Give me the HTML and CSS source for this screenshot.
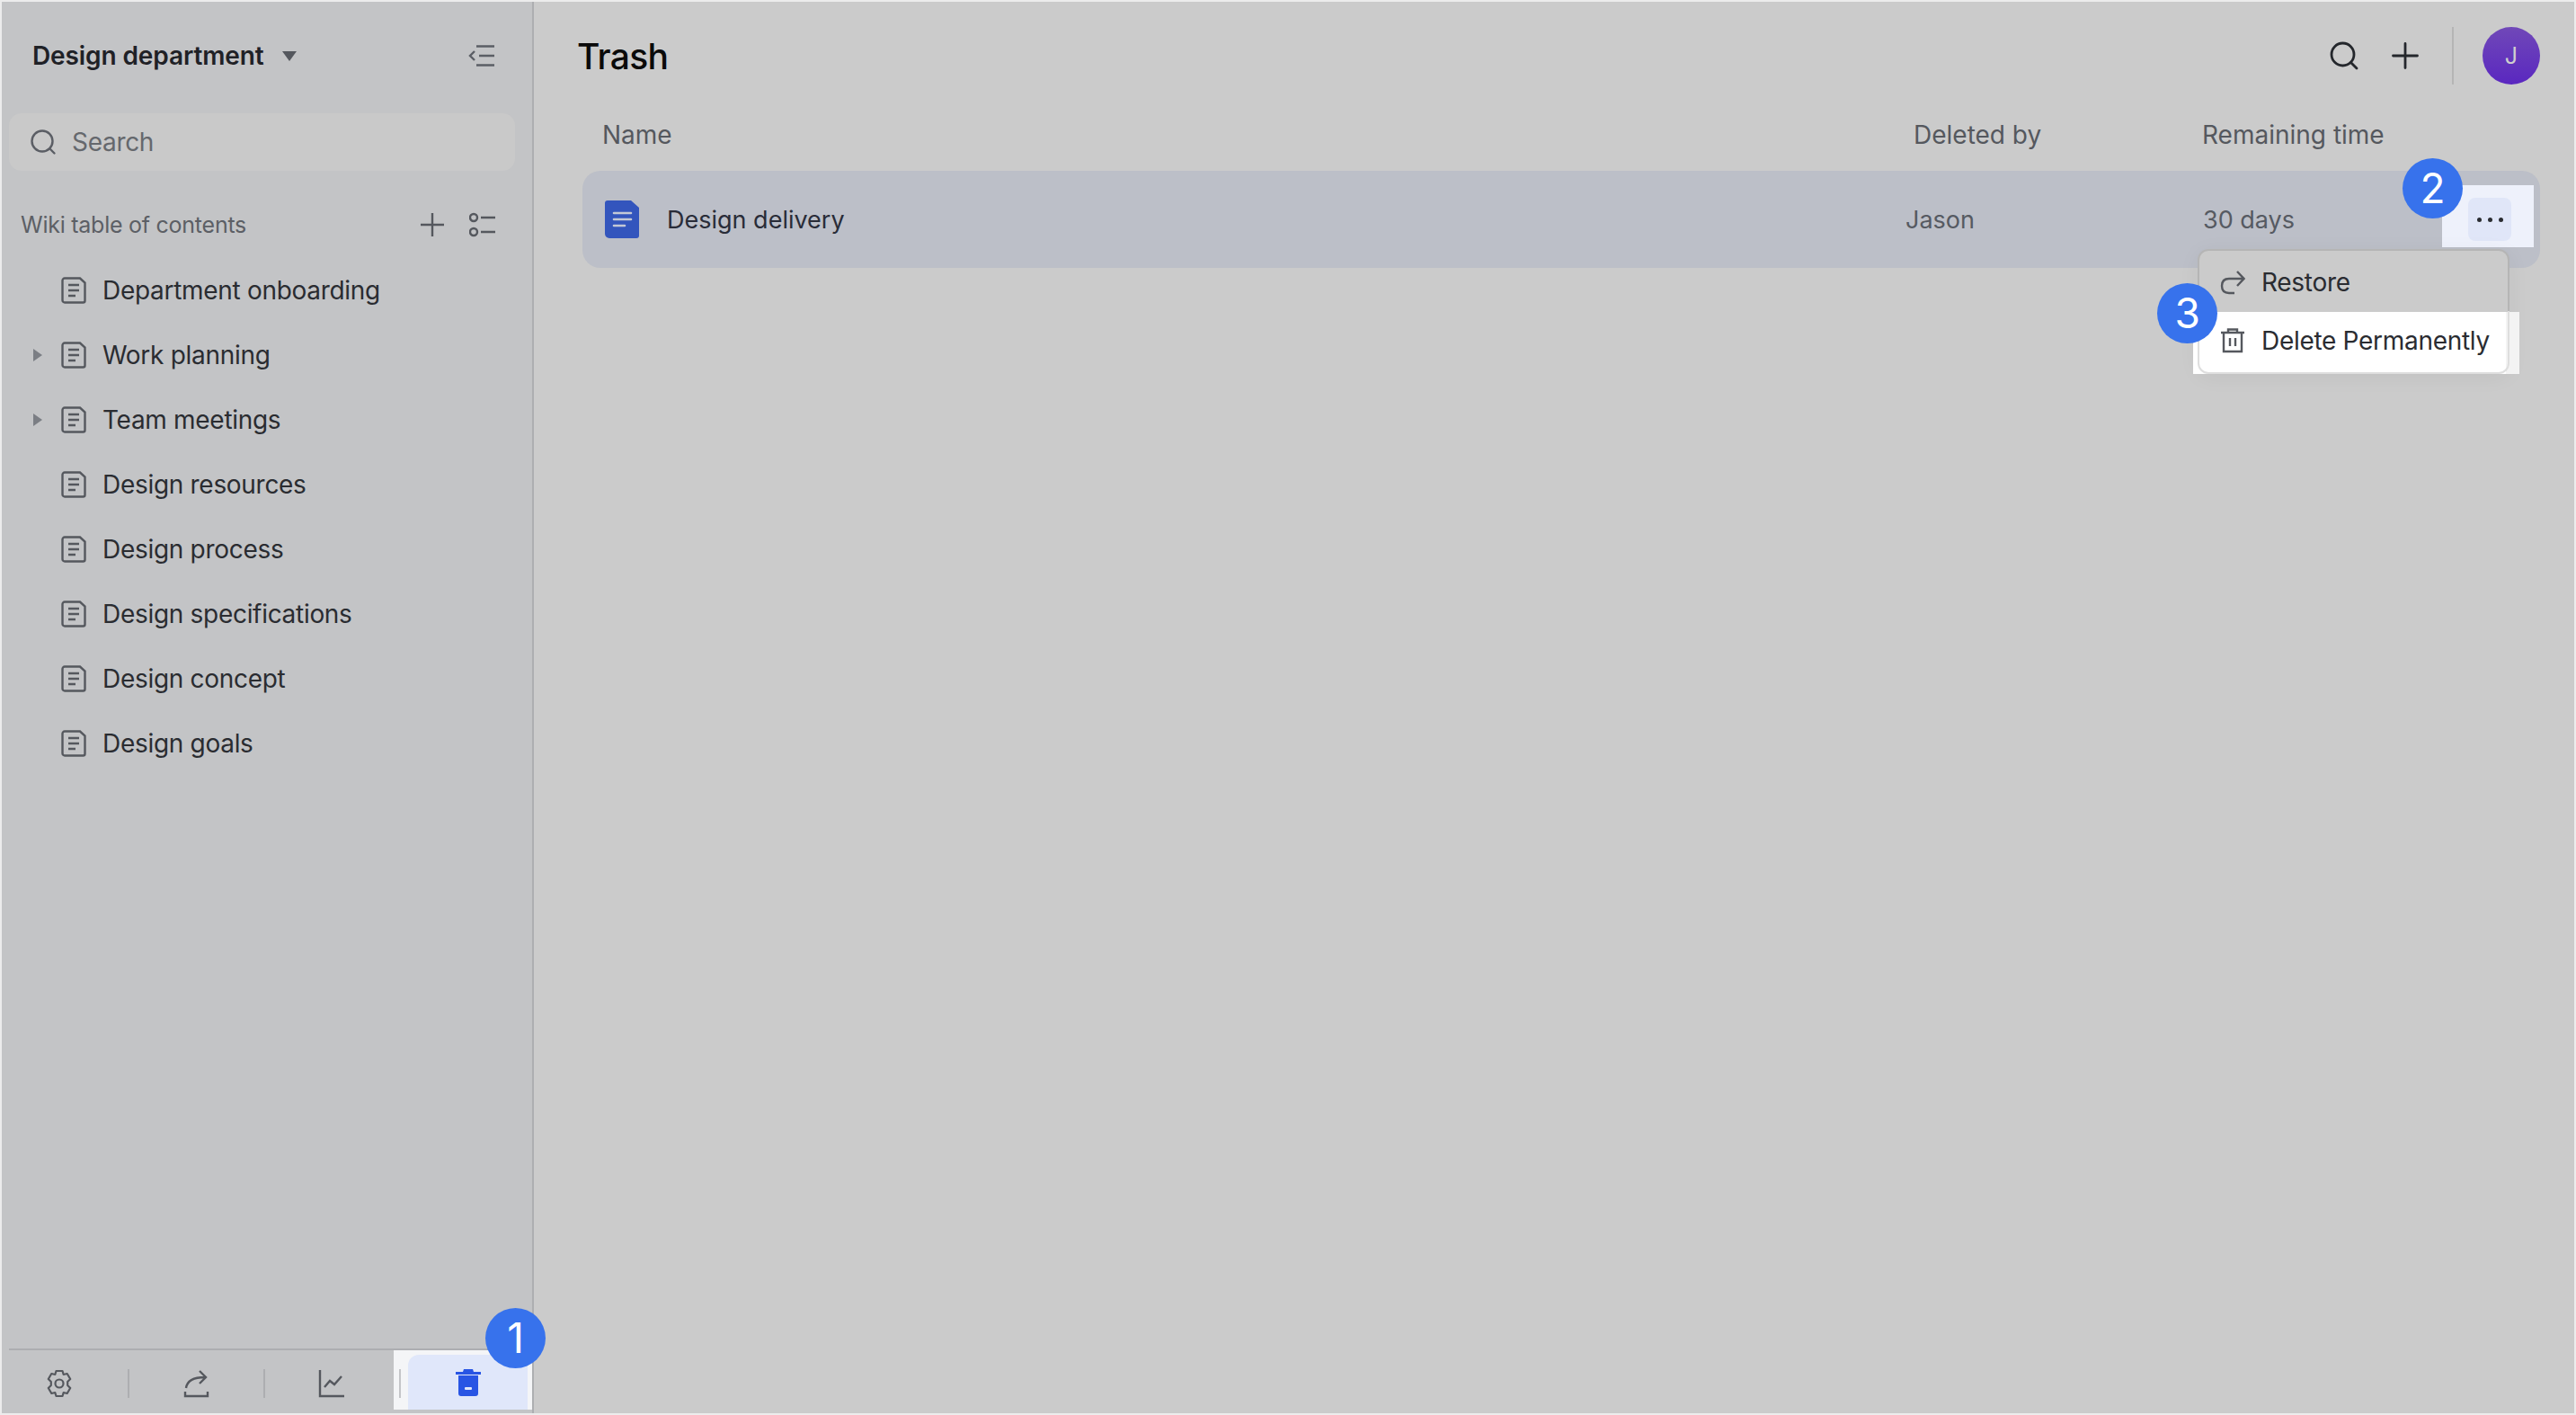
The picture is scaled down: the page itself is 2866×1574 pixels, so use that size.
FILE: index.html
```html
<!DOCTYPE html>
<html lang="en">
<head>
  <meta charset="utf-8">
  <title>Trash</title>
  <link rel="stylesheet" href="styles.css">
</head>
<body>
  <div class="app">

    <aside class="sidebar">
      <div class="side-head">
        <span class="wiki-name">Design department</span>
        <span class="caret"></span>
        <svg class="collapse" width="32" height="26" viewBox="0 0 32 26" fill="none" stroke="#5b5e65" stroke-width="2.4">
          <path d="M8 8l-5 5 5 5M10 2.500h20M13 13h17M10 23.500h20"/>
        </svg>
      </div>

      <div class="search">
        <svg width="30" height="30" viewBox="0 0 30 30" fill="none" stroke="#5b5e65" stroke-width="2.400">
          <circle cx="14" cy="14" r="11.500"/><path d="M22.500 22.500l5 5" stroke-linecap="round"/>
        </svg>
        <span>Search</span>
      </div>

      <div class="toc-head">
        <span class="toc-title">Wiki table of contents</span>
        <svg width="28" height="28" viewBox="0 0 28 28" fill="none" stroke="#55585e" stroke-width="2.400">
          <path d="M14 1v26M1 14h26"/>
        </svg>
        <svg class="toc-list" width="30" height="28" viewBox="0 0 30 28" fill="none" stroke="#55585e" stroke-width="2.400">
          <circle cx="5" cy="6" r="4"/><circle cx="5" cy="22" r="4"/><path d="M13 6h16M13 22h16"/>
        </svg>
      </div>

      <ul class="tree">
        <li class="tree-item"><span class="arrow none"></span><svg class="doc" width="28" height="30" viewBox="0 0 28 30"><use href="#doc-line"/></svg>Department onboarding</li>
        <li class="tree-item"><span class="arrow"></span><svg class="doc" width="28" height="30" viewBox="0 0 28 30"><use href="#doc-line"/></svg>Work planning</li>
        <li class="tree-item"><span class="arrow"></span><svg class="doc" width="28" height="30" viewBox="0 0 28 30"><use href="#doc-line"/></svg>Team meetings</li>
        <li class="tree-item"><span class="arrow none"></span><svg class="doc" width="28" height="30" viewBox="0 0 28 30"><use href="#doc-line"/></svg>Design resources</li>
        <li class="tree-item"><span class="arrow none"></span><svg class="doc" width="28" height="30" viewBox="0 0 28 30"><use href="#doc-line"/></svg>Design process</li>
        <li class="tree-item"><span class="arrow none"></span><svg class="doc" width="28" height="30" viewBox="0 0 28 30"><use href="#doc-line"/></svg>Design specifications</li>
        <li class="tree-item"><span class="arrow none"></span><svg class="doc" width="28" height="30" viewBox="0 0 28 30"><use href="#doc-line"/></svg>Design concept</li>
        <li class="tree-item"><span class="arrow none"></span><svg class="doc" width="28" height="30" viewBox="0 0 28 30"><use href="#doc-line"/></svg>Design goals</li>
      </ul>

      <div class="toolbar">
        <div class="tool tool-set">
          <svg width="30" height="32" viewBox="0 0 30 32" fill="none" stroke="#55585e" stroke-width="2.200" stroke-linejoin="round">
            <path d="M11.500 2h7l1.200 4 4-1 3.500 6-3 3v4l3 3-3.500 6-4-1-1.200 4h-7l-1.200-4-4 1-3.500-6 3-3v-4l-3-3 3.500-6 4 1z"/>
            <circle cx="15" cy="16" r="4.500"/>
          </svg>
        </div>
        <div class="tool tool-share">
          <svg width="30" height="32" viewBox="0 0 30 32" fill="none" stroke="#55585e" stroke-width="2.400">
            <path d="M3 21c1-7 7-12 21-12M18 2l7 7-7 7M2 25v5h25v-5"/>
          </svg>
        </div>
        <div class="tool tool-chart">
          <svg width="30" height="32" viewBox="0 0 30 32" fill="none" stroke="#55585e" stroke-width="2.400">
            <path d="M2 1v29h27M7 20l6-7 5 4 8-9"/>
          </svg>
        </div>
        <div class="tool-active">
          <span class="tool-on">
            <svg width="28" height="30" viewBox="0 0 28 30">
              <path fill="#2855e4" d="M9 0h10l1 3h8v3H0V3h8zM3 7h22v20a3 3 0 0 1-3 3H6a3 3 0 0 1-3-3z"/>
              <rect x="10" y="20" width="8" height="3" rx="1" fill="#e0e7fa"/>
            </svg>
          </span>
          <span class="badge badge-one">1</span>
        </div>
      </div>
    </aside>

    <main class="main">
      <header class="top">
        <h1>Trash</h1>
        <svg class="top-search" width="32" height="32" viewBox="0 0 32 32" fill="none" stroke="#24272c" stroke-width="2.800">
          <circle cx="14.500" cy="14.500" r="12.500"/><path d="M24 24l6 6" stroke-linecap="round"/>
        </svg>
        <svg class="top-plus" width="30" height="30" viewBox="0 0 30 30" fill="none" stroke="#24272c" stroke-width="2.800" stroke-linecap="round">
          <path d="M15 1.500v27M1.500 15h27"/>
        </svg>
        <span class="top-sep"></span>
        <span class="avatar">J</span>
      </header>

      <div class="cols">
        <span class="col-name">Name</span>
        <span class="col-by">Deleted by</span>
        <span>Remaining time</span>
      </div>

      <div class="row">
        <svg class="row-doc" width="38" height="42" viewBox="0 0 38 42">
          <path fill="#3355bd" d="M3 0h26l9 8v31a3 3 0 0 1-3 3H5a5 5 0 0 1-5-5V3a3 3 0 0 1 3-3z"/>
          <path d="M10 14h19M10 21h19M10 28h12" stroke="#c3c8d6" stroke-width="2.600" stroke-linecap="round"/>
        </svg>
        <span class="row-name">Design delivery</span>
        <span class="row-by">Jason</span>
        <span class="row-left">30 days</span>
        <div class="more-spot">
          <span class="more"><i></i><i></i><i></i></span>
          <span class="badge badge-two">2</span>
        </div>
      </div>

      <div class="menu">
        <div class="menu-item">
          <svg width="28" height="28" viewBox="0 0 28 28" fill="none" stroke="#55585e" stroke-width="2.400">
            <path d="M26 10H10C5 10 2 13 2 18s3 8 8 8h6M19 2l7.500 8-7.500 8"/>
          </svg>
          Restore
        </div>
        <div class="menu-item menu-on">
          <svg width="28" height="28" viewBox="0 0 28 28" fill="none" stroke="#55585e" stroke-width="2.400">
            <path d="M1 5h26M9 4V1.500h10V4M4 5v21h20V5M11 11v9M17 11v9"/>
          </svg>
          Delete Permanently
        </div>
        <span class="badge badge-three">3</span>
      </div>
    </main>
  </div>

  <svg width="0" height="0" class="defs">
    <symbol id="doc-line" viewBox="0 0 28 30">
      <path d="M4 1.500h17l5.500 5v20a2 2 0 0 1-2 2H4a2.500 2.500 0 0 1-2.500-2.500V4A2.500 2.500 0 0 1 4 1.500z" fill="none" stroke="#55585e" stroke-width="2.400"/>
      <path d="M8 9h12M8 15h12M8 21h8" fill="none" stroke="#55585e" stroke-width="2.400"/>
    </symbol>
  </svg>
</body>
</html>
```

FILE: styles.css
```css
html, body {
  margin: 0;
  padding: 0;
  height: 100%;
  background: #ececec;
  overflow: hidden;
}
body {
  padding: 2px;
  box-sizing: border-box;
  font-family: Inter, "Liberation Sans", sans-serif;
  font-size: 28px;
  color: #2a2c31;
}
.defs { position: absolute; }

.app {
  display: flex;
  height: 100%;
  background: #cbcbcb;
}

/* sidebar */
.sidebar {
  width: 592px;
  box-sizing: border-box;
  flex: none;
  display: flex;
  flex-direction: column;
  background: #c3c4c6;
  border-right: 2px solid #adaeb1;
}
.side-head {
  display: flex;
  align-items: center;
  height: 58px;
  margin-top: 31px;
  padding: 0 40px 0 34px;
}
.wiki-name {
  font-weight: 600;
  font-size: 28px;
  letter-spacing: -0.1px;
  color: #1f2126;
}
.caret {
  margin-left: 20px;
  border-left: 8px solid transparent;
  border-right: 8px solid transparent;
  border-top: 11px solid #55585e;
}
.collapse { margin-left: auto; }

.search {
  display: flex;
  align-items: center;
  gap: 17px;
  height: 64px;
  margin: 35px 19px 0 8px;
  padding-left: 23px;
  border-radius: 14px;
  background: #c9c9c9;
  color: #65686d;
  letter-spacing: -0.3px;
}

.toc-head {
  display: flex;
  align-items: center;
  height: 40px;
  margin-top: 40px;
  padding: 0 40px 0 21px;
}
.toc-title {
  font-size: 25px;
  letter-spacing: -0.25px;
  color: #5c5f65;
  margin-right: auto;
}
.toc-list { margin-left: 27px; }

.tree {
  list-style: none;
  margin: 17px 0 0;
  padding: 0;
  flex: 1;
  letter-spacing: -0.3px;
}
.tree-item {
  display: flex;
  align-items: center;
  height: 72px;
  padding-left: 35px;
}
.arrow {
  width: 0;
  border-left: 10px solid #7b7e84;
  border-top: 7px solid transparent;
  border-bottom: 7px solid transparent;
  margin-right: 21px;
}
.arrow.none { border-left-color: transparent; }
.doc { margin-right: 18px; }

.toolbar {
  display: flex;
  margin-left: 8px;
  height: 70px;
  border-top: 2px solid #adaeb1;
}
.tool {
  display: flex;
  align-items: center;
  justify-content: center;
  height: 32px;
  margin-top: 21px;
  border-right: 2px solid #adaeb1;
  box-sizing: border-box;
}
.tool-set { width: 134px; padding-right: 21px; }
.tool-share { width: 151px; }
.tool-chart { width: 143px; padding-left: 5px; border-right: none; }

.tool-active {
  position: relative;
  flex: 1;
  display: flex;
  height: 66px;
  padding: 5px 5px 0 16px;
  box-sizing: border-box;
  background: #f4f5f7;
}
.tool-active::before {
  content: "";
  position: absolute;
  left: 6px;
  top: 21px;
  width: 2px;
  height: 32px;
  background: #c4c5c8;
}
.tool-on {
  flex: 1;
  display: flex;
  align-items: center;
  justify-content: center;
  background: #e0e7fa;
  border-radius: 12px 12px 0 0;
}

.badge {
  position: absolute;
  width: 67px;
  height: 67px;
  border-radius: 50%;
  background: #3772ec;
  color: #fff;
  font-size: 46px;
  line-height: 67px;
  text-align: center;
  z-index: 3;
}
.badge-one { left: 102px; top: -47px; }
.badge-two { left: -44px; top: -30px; }
.badge-three { left: -47px; top: 36px; }

/* main */
.main {
  position: relative;
  flex: 1;
  min-width: 0;
  padding: 0 38px 0 54px;
}
.top {
  display: flex;
  align-items: center;
  height: 64px;
  padding-top: 28px;
}
.top h1 {
  margin: 0 auto 0 -6px;
  font-size: 39px;
  font-weight: 500;
  letter-spacing: -0.7px;
  color: #0a0a0a;
}
.top-plus { margin-left: 37px; }
.top-sep {
  width: 2px;
  height: 64px;
  margin: 0 32px 0 37px;
  background: #b5b5b5;
}
.avatar {
  width: 64px;
  height: 64px;
  border-radius: 50%;
  background: linear-gradient(#7048b8, #5a27c0);
  color: #cfcfcf;
  font-size: 25px;
  line-height: 64px;
  text-align: center;
}

.cols {
  display: flex;
  align-items: center;
  height: 40px;
  margin-top: 36px;
  padding-left: 22px;
  color: #55585e;
}
.col-name { width: 1459px; }
.col-by { width: 321px; }

.row {
  display: flex;
  align-items: center;
  height: 108px;
  margin-top: 20px;
  padding: 0 7px 0 25px;
  border-radius: 20px;
  background: #bcbfc8;
  font-size: 27px;
}
.row-doc { margin-right: 31px; }
.row-name { width: 1378px; color: #292c38; }
.row-by { width: 331px; color: #565a62; }
.row-left { color: #565a62; margin-right: auto; }

.more-spot {
  position: relative;
  display: flex;
  align-items: center;
  justify-content: center;
  width: 102px;
  height: 69px;
  margin-top: -7px;
  padding: 7px 0 0 4px;
  box-sizing: border-box;
  background: #eef1fb;
}
.more {
  display: flex;
  align-items: center;
  justify-content: center;
  gap: 7px;
  width: 48px;
  height: 48px;
  border-radius: 8px;
  background: #e0e6f8;
}
.more i {
  width: 5px;
  height: 5px;
  border-radius: 50%;
  background: #2a2c31;
}

.menu {
  position: absolute;
  left: 1851px;
  top: 275px;
  width: 347px;
  height: 138px;
  box-sizing: border-box;
  border: 2px solid #b5b5b5;
  border-radius: 12px;
  background: #cbcbcb;
  box-shadow: 0 4px 24px rgba(0, 0, 0, .05);
  letter-spacing: -0.3px;
}
.menu-item {
  position: relative;
  display: flex;
  align-items: center;
  gap: 18px;
  height: 70px;
  padding-left: 23px;
}
.menu-on {
  height: 69px;
  box-sizing: border-box;
  z-index: 1;
  margin: -2px -13px 0 -7px;
  padding: 0 0 6px 30px;
  background: linear-gradient(90deg, #fff 96%, #f3f3f3 96%);
}
.menu-on::after {
  content: "";
  position: absolute;
  left: 5px;
  right: 11px;
  top: -1px;
  bottom: 0;
  border: 2px solid #dedede;
  border-top: none;
  border-radius: 0 0 12px 12px;
}
```
